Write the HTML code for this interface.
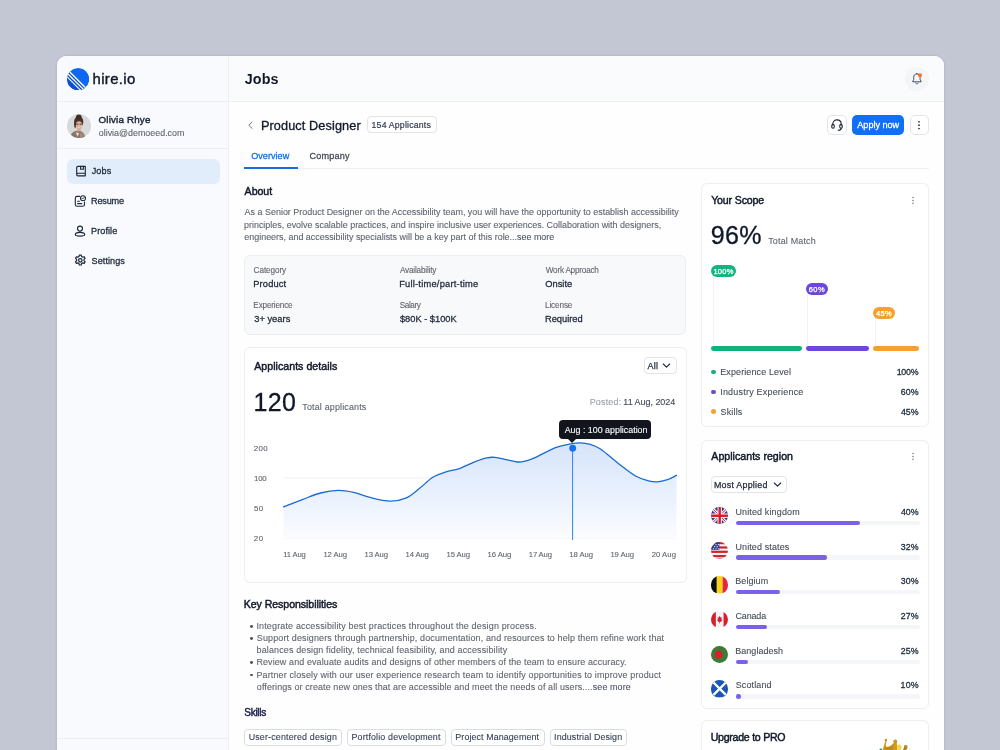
<!DOCTYPE html>
<html>
<head>
<meta charset="utf-8">
<style>
*{box-sizing:border-box;margin:0;padding:0}
html,body{width:1000px;height:750px;overflow:hidden}
body{background:#c3c6d3;font-family:"Liberation Sans",sans-serif;color:#101828;position:relative}
.a{position:absolute}
.t{position:absolute;white-space:pre;line-height:1}
#txt{position:absolute;left:0;top:0;width:1000px;height:750px;will-change:transform}
#card{position:absolute;left:57px;top:56px;width:887px;height:720px;background:#fefefe;border-radius:9.5px 9.5px 0 0;overflow:hidden;box-shadow:0 0 2px rgba(70,80,110,.25)}
#side{position:absolute;left:0;top:0;width:172px;height:720px;background:#f8fafd;border-right:1px solid #ebeef2}
#head{position:absolute;left:172px;top:0;width:715px;height:46px;background:#fafbfd;border-bottom:1px solid #ebeef2}
.hl{position:absolute;height:1px;background:#ebeef2}
.box{position:absolute;border:1px solid #eceef2;border-radius:6px;background:#fff}
.btn{position:absolute;border:1px solid #e1e4e9;border-radius:5px;background:#fff}
.chip{position:absolute;top:728.5px;height:17px;border:1px solid #d9dde3;border-radius:4px;background:#fff}
.tr{position:absolute;left:736px;width:183.5px;height:4.4px;border-radius:2.2px;background:#f4f6f9}
.fl{position:absolute;left:736px;height:4.4px;border-radius:2.2px;background:#7b61ea}
.flag{position:absolute;left:711px;width:17.4px;height:17.4px;border-radius:50%;overflow:hidden}
.flag svg{display:block;width:17.4px;height:17.4px}
.bd{position:absolute;height:11.8px;border-radius:6px}
</style>
</head>
<body>
<div id="card">
  <div id="side"></div>
  <div id="head"></div>
  <div class="hl" style="left:0;top:45px;width:172px"></div>
  <div class="hl" style="left:0;top:92px;width:172px"></div>
  <div class="hl" style="left:0;top:682px;width:172px"></div>
</div>

<!-- logo -->
<svg class="a" style="left:66.7px;top:67.8px" width="22.4" height="22.4" viewBox="0 0 22.4 22.4">
  <defs><clipPath id="lc"><circle cx="11.2" cy="11.2" r="11.1"/></clipPath></defs>
  <g clip-path="url(#lc)">
    <circle cx="11.2" cy="11.2" r="11.1" fill="#0f68f2"/>
    <path d="M-4 -3.4L24 24.6L-4 24.6Z" fill="#0a4fd8"/>
    <g stroke="#f8fafd">
      <line x1="-4" y1="-2.7" x2="24" y2="25.3" stroke-width="1.45"/>
      <line x1="-4" y1="1.0" x2="24" y2="29.0" stroke-width="1.3"/>
      <line x1="-4" y1="4.7" x2="24" y2="32.7" stroke-width="1.15"/>
    </g>
  </g>
</svg>

<!-- avatar -->
<div class="a" style="left:67px;top:113.6px;width:24px;height:24px;border-radius:50%;overflow:hidden">
  <svg width="24" height="24" viewBox="0 0 24 24" style="display:block">
    <rect width="24" height="24" fill="#d7d9db"/>
    <path d="M3 24C3.4 19.2 6.6 16.8 10.8 16.4C15 16.6 17.8 19 18 24Z" fill="#8b7567"/>
    <path d="M8.6 18.2L10.6 22.5L12.2 19.2Z" fill="#eadfd3"/>
    <path d="M13.5 18L16.4 20.5L15.6 24H12.8Z" fill="#a58d7d"/>
    <rect x="10" y="14" width="3.6" height="3.4" fill="#d6a78e"/>
    <ellipse cx="11.7" cy="7.8" rx="4.6" ry="5.6" fill="#49332a"/>
    <path d="M7.2 8C6.8 11 7.2 13.4 8.4 14.6L9.4 10Z" fill="#49332a"/>
    <ellipse cx="11.8" cy="2.9" rx="2.8" ry="2.5" fill="#3f2c25"/>
    <ellipse cx="12" cy="11.2" rx="3.1" ry="3.9" fill="#deb39c"/>
    <path d="M9.2 10.2H11.4M12.6 10.2H14.8" stroke="#3c2a26" stroke-width=".9"/>
    <path d="M10.8 13.2C11.5 13.8 12.6 13.8 13.3 13.2" stroke="#f3e6e0" stroke-width=".7" fill="none"/>
  </svg>
</div>

<!-- nav -->
<div class="a" style="left:67px;top:159px;width:153px;height:25px;border-radius:6px;background:#e2edfb"></div>
<svg class="a" style="left:74.7px;top:165.3px" width="12" height="12" viewBox="0 0 12 12" fill="none" stroke="#1d2939" stroke-width="1.15" stroke-linejoin="round" stroke-linecap="round">
  <path d="M1.7 9.4V2.6C1.7 1.8 2.3 1.3 3 1.3H10.3V8.2H3C2.3 8.2 1.7 8.7 1.7 9.5C1.7 10.2 2.3 10.8 3 10.8H10.3V8.2"/>
  <path d="M5.6 1.3V4.2H8.4V1.3"/>
</svg>
<svg class="a" style="left:74px;top:195px" width="12" height="12" viewBox="0 0 12 12" fill="none" stroke="#1d2939" stroke-width="1.1" stroke-linejoin="round" stroke-linecap="round">
  <path d="M5.6 1.4H3.1C2.1 1.4 1.3 2.2 1.3 3.2V9.4C1.3 10.4 2.1 11.2 3.1 11.2H8.7C9.7 11.2 10.5 10.4 10.5 9.4V7"/>
  <circle cx="9" cy="3.2" r="2.5"/>
  <path d="M8 3.3L8.7 4L10 2.5" stroke-width=".85"/>
  <path d="M3.6 6.3H5.4M3.6 8.6H7.8"/>
</svg>
<svg class="a" style="left:74.4px;top:225px" width="12" height="12" viewBox="0 0 12 12" fill="none" stroke="#1d2939" stroke-width="1.15" stroke-linejoin="round" stroke-linecap="round">
  <circle cx="6" cy="3.6" r="2.5"/>
  <path d="M6 7.4C3.3 7.4 1.3 8.4 1.3 9.6C1.3 10.6 2.8 11.1 6 11.1C9.2 11.1 10.7 10.6 10.7 9.6C10.7 8.4 8.7 7.4 6 7.4Z"/>
</svg>
<svg class="a" style="left:73.9px;top:254.2px" width="12.6" height="12.6" viewBox="0 0 24 24" fill="none" stroke="#1d2939" stroke-width="2.3" stroke-linejoin="round" stroke-linecap="round">
  <circle cx="12" cy="12" r="3.3"/>
  <path d="M10.2 2h3.6l.7 2.9 2 1.15 2.85-.85 1.8 3.1-2.15 2.05v2.3l2.15 2.05-1.8 3.1-2.85-.85-2 1.15-.7 2.9h-3.6l-.7-2.9-2-1.15-2.85.85-1.8-3.1 2.15-2.05v-2.3L2.85 8.3l1.8-3.1 2.85.85 2-1.15z"/>
</svg>

<!-- bell -->
<div class="a" style="left:904.5px;top:67.3px;width:24px;height:24px;border-radius:50%;background:#f3f5f8"></div>
<svg class="a" style="left:910px;top:72px" width="14" height="14" viewBox="0 0 14 14" fill="none" stroke="#475467" stroke-width="1" stroke-linejoin="round" stroke-linecap="round">
  <path d="M6.9 1.8C4.9 1.8 3.7 3.3 3.7 5.2V7.6L2.6 9.8H11.2L10.1 7.6V5.2C10.1 3.3 8.9 1.8 6.9 1.8Z"/>
  <path d="M5.7 10.9C6 11.6 6.4 11.9 6.9 11.9C7.4 11.9 7.8 11.6 8.1 10.9"/>
  <circle cx="10" cy="3.2" r="2" fill="#f97316" stroke="none"/>
</svg>

<!-- title row -->
<svg class="a" style="left:246px;top:120px" width="9" height="11" viewBox="0 0 9 11" fill="none" stroke="#667085" stroke-width="1" stroke-linecap="round" stroke-linejoin="round"><path d="M6 2.2L2.8 5.3L6 8.4"/></svg>
<div class="btn" style="left:367.3px;top:116.4px;width:69.4px;height:17px;border-radius:4px"></div>

<div class="btn" style="left:827.4px;top:115.4px;width:19.5px;height:19.5px"></div>
<svg class="a" style="left:830.2px;top:118.2px" width="14" height="14" viewBox="0 0 14 14" fill="none" stroke="#1d2939" stroke-width="1.1" stroke-linecap="round" stroke-linejoin="round">
  <path d="M2.8 7V6C2.8 3.6 4.6 1.9 7 1.9C9.4 1.9 11.2 3.6 11.2 6V7"/>
  <rect x="1.8" y="6.4" width="2.4" height="3.8" rx="1.1"/>
  <rect x="9.8" y="6.4" width="2.4" height="3.8" rx="1.1"/>
  <path d="M11.2 10.2C11.2 11.6 10 12.2 8.2 12.2"/>
</svg>
<div class="a" style="left:852.2px;top:115.4px;width:52px;height:19.5px;border-radius:5px;background:#0f6ff6"></div>
<div class="btn" style="left:909.5px;top:115.4px;width:19.3px;height:19.5px"></div>
<svg class="a" style="left:917.2px;top:120.2px" width="4" height="10" viewBox="0 0 4 10" fill="#1d2939"><circle cx="2" cy="1.8" r=".85"/><circle cx="2" cy="5.2" r=".85"/><circle cx="2" cy="8.5" r=".85"/></svg>

<!-- tabs -->
<div class="hl" style="left:244px;top:168px;width:685px"></div>
<div class="a" style="left:244px;top:166.7px;width:54px;height:2px;background:#1a6bde"></div>

<!-- info box -->
<div class="box" style="left:244.4px;top:255.2px;width:442px;height:79.4px;background:#f8f9fb"></div>

<!-- applicants details -->
<div class="box" style="left:244.4px;top:347.3px;width:442.2px;height:235.6px"></div>
<div class="btn" style="left:643.7px;top:357.2px;width:33px;height:17.2px;border-radius:4px"></div>
<svg class="a" style="left:662px;top:363px" width="9" height="6" viewBox="0 0 9 6" fill="none" stroke="#1d2939" stroke-width="1.1" stroke-linecap="round" stroke-linejoin="round"><path d="M1.3 1L4.5 4.2L7.7 1"/></svg>

<!-- chart -->
<svg class="a" style="left:244px;top:410px" width="443" height="140" viewBox="244 410 443 140">
  <defs>
    <linearGradient id="cg" gradientUnits="userSpaceOnUse" x1="0" y1="443" x2="0" y2="538">
      <stop offset="0" stop-color="#d6e4fa"/>
      <stop offset=".55" stop-color="#e9f1fd"/>
      <stop offset="1" stop-color="#fbfcff"/>
    </linearGradient>
  </defs>
  <line x1="284" y1="478" x2="600" y2="478" stroke="#f0f2f5" stroke-width="1"/>
  <line x1="284" y1="538" x2="676" y2="538" stroke="#f0f2f5" stroke-width="1"/>
  <path d="M283.5 506.8 C286.8 505.6 296.8 501.6 303.0 499.3 C309.2 497.0 314.7 494.5 320.6 493.0 C326.5 491.5 332.7 490.5 338.2 490.4 C343.7 490.3 348.5 491.3 353.6 492.4 C358.7 493.5 362.9 495.7 369.0 497.2 C375.1 498.7 383.7 501.1 389.9 501.2 C396.1 501.3 401.4 499.9 406.4 497.8 C411.3 495.7 415.2 491.7 419.6 488.3 C424.0 484.9 428.4 480.1 432.8 477.3 C437.2 474.6 441.6 473.2 446.0 471.8 C450.4 470.4 454.4 470.3 459.2 468.6 C464.0 466.9 470.0 463.6 474.6 461.8 C479.2 460.0 483.6 458.5 487.0 457.8 C490.4 457.1 491.8 457.1 495.0 457.4 C498.2 457.7 502.3 458.8 506.0 459.6 C509.7 460.4 513.9 461.8 517.4 462.0 C520.9 462.2 524.1 461.3 527.0 460.6 C529.9 459.9 530.4 459.8 535.0 457.7 C539.6 455.6 549.1 450.1 554.8 447.8 C560.5 445.6 564.8 445.0 569.0 444.2 C573.2 443.4 576.4 442.8 580.0 442.8 C583.6 442.8 587.1 443.4 590.5 444.4 C593.9 445.4 595.9 445.9 600.5 449.0 C605.1 452.1 612.2 458.7 618.0 463.2 C623.8 467.7 630.4 473.1 635.5 476.0 C640.6 478.9 644.9 479.8 648.5 480.8 C652.1 481.8 653.8 482.1 657.0 481.9 C660.2 481.7 664.2 480.8 667.5 479.7 C670.8 478.6 675.0 476.0 676.5 475.3 L676.5 538 L283.5 538 Z" fill="url(#cg)"/>
  <path d="M283.5 506.8 C286.8 505.6 296.8 501.6 303.0 499.3 C309.2 497.0 314.7 494.5 320.6 493.0 C326.5 491.5 332.7 490.5 338.2 490.4 C343.7 490.3 348.5 491.3 353.6 492.4 C358.7 493.5 362.9 495.7 369.0 497.2 C375.1 498.7 383.7 501.1 389.9 501.2 C396.1 501.3 401.4 499.9 406.4 497.8 C411.3 495.7 415.2 491.7 419.6 488.3 C424.0 484.9 428.4 480.1 432.8 477.3 C437.2 474.6 441.6 473.2 446.0 471.8 C450.4 470.4 454.4 470.3 459.2 468.6 C464.0 466.9 470.0 463.6 474.6 461.8 C479.2 460.0 483.6 458.5 487.0 457.8 C490.4 457.1 491.8 457.1 495.0 457.4 C498.2 457.7 502.3 458.8 506.0 459.6 C509.7 460.4 513.9 461.8 517.4 462.0 C520.9 462.2 524.1 461.3 527.0 460.6 C529.9 459.9 530.4 459.8 535.0 457.7 C539.6 455.6 549.1 450.1 554.8 447.8 C560.5 445.6 564.8 445.0 569.0 444.2 C573.2 443.4 576.4 442.8 580.0 442.8 C583.6 442.8 587.1 443.4 590.5 444.4 C593.9 445.4 595.9 445.9 600.5 449.0 C605.1 452.1 612.2 458.7 618.0 463.2 C623.8 467.7 630.4 473.1 635.5 476.0 C640.6 478.9 644.9 479.8 648.5 480.8 C652.1 481.8 653.8 482.1 657.0 481.9 C660.2 481.7 664.2 480.8 667.5 479.7 C670.8 478.6 675.0 476.0 676.5 475.3" fill="none" stroke="#1a6ad2" stroke-width="1.3" stroke-linecap="round"/>
  <line x1="572.6" y1="448" x2="572.6" y2="540" stroke="#2f86e6" stroke-width="1"/>
  <circle cx="572.7" cy="448.2" r="3.4" fill="#1570ef"/>
</svg>
<div class="a" style="left:558.8px;top:420.4px;width:92.4px;height:18.3px;border-radius:4px;background:#12151d"></div>
<div class="a" style="left:568.2px;top:438.5px;width:0;height:0;border-left:4.6px solid transparent;border-right:4.6px solid transparent;border-top:4.2px solid #12151d"></div>

<!-- bullets -->
<div class="a" style="left:250px;top:624.8px;width:2.8px;height:2.8px;border-radius:50%;background:#4a5160"></div>
<div class="a" style="left:250px;top:637.2px;width:2.8px;height:2.8px;border-radius:50%;background:#4a5160"></div>
<div class="a" style="left:250px;top:661.3px;width:2.8px;height:2.8px;border-radius:50%;background:#4a5160"></div>
<div class="a" style="left:250px;top:673.6px;width:2.8px;height:2.8px;border-radius:50%;background:#4a5160"></div>

<!-- chips -->
<div class="chip" style="left:244.4px;width:97.2px"></div>
<div class="chip" style="left:347.4px;width:98.4px"></div>
<div class="chip" style="left:451px;width:93.5px"></div>
<div class="chip" style="left:550px;width:76.6px"></div>

<!-- your scope -->
<div class="box" style="left:701.3px;top:183.4px;width:227.5px;height:244px"></div>
<svg class="a" style="left:910.8px;top:196px" width="4" height="9" viewBox="0 0 4 9" fill="#667085"><circle cx="2" cy="1.5" r=".75"/><circle cx="2" cy="4.4" r=".75"/><circle cx="2" cy="7.3" r=".75"/></svg>
<div class="a" style="left:713px;top:272px;width:1px;height:75px;background:#f0f2f5"></div>
<div class="a" style="left:807.2px;top:290px;width:1px;height:57px;background:#f0f2f5"></div>
<div class="a" style="left:874.5px;top:313px;width:1px;height:34px;background:#f0f2f5"></div>
<div class="bd" style="left:711px;top:265.3px;width:25.4px;background:#12b57f"></div>
<div class="bd" style="left:806px;top:283.4px;width:21.9px;background:#6c47d9"></div>
<div class="bd" style="left:872.8px;top:306.8px;width:22.1px;background:#f5a031"></div>
<div class="a" style="left:711px;top:346px;width:90.8px;height:4.7px;border-radius:2.4px;background:#12b07a"></div>
<div class="a" style="left:806px;top:346px;width:63px;height:4.7px;border-radius:2.4px;background:#6c47d9"></div>
<div class="a" style="left:873px;top:346px;width:46px;height:4.7px;border-radius:2.4px;background:#f5a031"></div>
<div class="a" style="left:711.1px;top:369.5px;width:4.6px;height:4.6px;border-radius:50%;background:#12b07a"></div>
<div class="a" style="left:711.1px;top:389.5px;width:4.6px;height:4.6px;border-radius:50%;background:#6c47d9"></div>
<div class="a" style="left:711.1px;top:409.4px;width:4.6px;height:4.6px;border-radius:50%;background:#f5a031"></div>

<!-- applicants region -->
<div class="box" style="left:701.3px;top:439.5px;width:227.5px;height:269px"></div>
<svg class="a" style="left:910.8px;top:452px" width="4" height="9" viewBox="0 0 4 9" fill="#667085"><circle cx="2" cy="1.5" r=".75"/><circle cx="2" cy="4.4" r=".75"/><circle cx="2" cy="7.3" r=".75"/></svg>
<div class="btn" style="left:711.3px;top:476.4px;width:75.3px;height:16.8px;border-radius:4px"></div>
<svg class="a" style="left:772.6px;top:482px" width="9" height="6" viewBox="0 0 9 6" fill="none" stroke="#1d2939" stroke-width="1.1" stroke-linecap="round" stroke-linejoin="round"><path d="M1.3 1L4.5 4.2L7.7 1"/></svg>

<div class="tr" style="top:520.8px"></div><div class="fl" style="top:520.8px;width:124px"></div>
<div class="tr" style="top:555.4px"></div><div class="fl" style="top:555.4px;width:90.5px"></div>
<div class="tr" style="top:590px"></div><div class="fl" style="top:590px;width:44.2px"></div>
<div class="tr" style="top:624.8px"></div><div class="fl" style="top:624.8px;width:31.2px"></div>
<div class="tr" style="top:659.5px"></div><div class="fl" style="top:659.5px;width:11.5px"></div>
<div class="tr" style="top:694.2px"></div><div class="fl" style="top:694.2px;width:5px"></div>

<!-- flags -->
<div class="flag" style="top:506.8px"><svg viewBox="0 0 18 18"><rect width="18" height="18" fill="#2a3a90"/><path d="M0 0L18 18M18 0L0 18" stroke="#f4f4f6" stroke-width="3"/><path d="M0 0L18 18M18 0L0 18" stroke="#d6202d" stroke-width="1"/><path d="M9 0V18M0 9H18" stroke="#f4f4f6" stroke-width="4.6"/><path d="M9 0V18M0 9H18" stroke="#d6202d" stroke-width="2.5"/></svg></div>
<div class="flag" style="top:541.6px"><svg viewBox="0 0 18 18"><rect width="18" height="18" fill="#f4f4f6"/><g fill="#d6202d"><rect y="0" width="18" height="2.3"/><rect y="4.5" width="18" height="2.3"/><rect y="9" width="18" height="2.3"/><rect y="13.5" width="18" height="2.3"/></g><rect y="17" width="18" height="1" fill="#d6202d"/><rect width="8.6" height="8.2" fill="#2b3c8f"/><g fill="#fff"><circle cx="2.6" cy="2.6" r=".65"/><circle cx="5.2" cy="2.6" r=".65"/><circle cx="7.6" cy="2.6" r=".65"/><circle cx="3.8" cy="4.8" r=".65"/><circle cx="6.4" cy="4.8" r=".65"/><circle cx="2.6" cy="7" r=".65"/><circle cx="5.2" cy="7" r=".65"/><circle cx="7.6" cy="7" r=".65"/></g></svg></div>
<div class="flag" style="top:576.2px"><svg viewBox="0 0 18 18"><rect width="6" height="18" fill="#0d0d0d"/><rect x="6" width="6" height="18" fill="#fad31b"/><rect x="12" width="6" height="18" fill="#e5283a"/></svg></div>
<div class="flag" style="top:610.8px"><svg viewBox="0 0 18 18"><rect width="18" height="18" fill="#f4f4f6"/><rect width="5" height="18" fill="#d6202d"/><rect x="13" width="5" height="18" fill="#d6202d"/><path d="M9 5L9.9 6.8L11.2 6.4L10.7 8.5L12.2 9.2L10.5 10.4L10.7 11.5L9.3 11.2V13H8.7V11.2L7.3 11.5L7.5 10.4L5.8 9.2L7.3 8.5L6.8 6.4L8.1 6.8Z" fill="#d6202d"/></svg></div>
<div class="flag" style="top:645.6px"><svg viewBox="0 0 18 18"><rect width="18" height="18" fill="#3f7a36"/><circle cx="7.8" cy="9" r="4" fill="#d6202d"/></svg></div>
<div class="flag" style="top:680.3px"><svg viewBox="0 0 18 18"><rect width="18" height="18" fill="#1b55b5"/><path d="M2.6 2.6L15.4 15.4M15.4 2.6L2.6 15.4" stroke="#fff" stroke-width="2.5"/></svg></div>

<!-- upgrade -->
<div class="box" style="left:701.3px;top:719.5px;width:227.5px;height:60px"></div>
<svg class="a" style="left:872px;top:732px" width="44" height="18" viewBox="872 732 44 18">
  <path d="M882.6 750L885.4 740.4L886.5 740.6L885.8 746.2C888 747.6 891.2 746.4 894 742.2L896.8 741.8L897.2 750Z" fill="#d09a1e"/>
  <path d="M884.6 750L885.6 746.4C888 747.8 891 747 893.4 744L893 750Z" fill="#c08a18"/>
  <ellipse cx="899.2" cy="747.3" rx="2.3" ry="2.9" fill="#f5d640"/>
  <circle cx="895.3" cy="741.3" r="1.8" fill="#bf8a1a"/>
  <circle cx="895.7" cy="741.3" r=".7" fill="#e0b230"/>
  <circle cx="885.9" cy="739.9" r="1.25" fill="#c8921c"/>
  <path d="M902.6 750L904.6 747.5L906.8 748L906.4 750Z" fill="#b07a1a"/>
  <circle cx="905.7" cy="746.9" r="1.9" fill="#b37e1c"/>
  <circle cx="906" cy="746.7" r=".7" fill="#d5a52a"/>
  <circle cx="880.8" cy="749.7" r="1.3" fill="#1e9a6b"/>
</svg>
<div id="txt">
<div class="t" style="left:92.57px;top:72.00px;font-size:14.90px;letter-spacing:0.359px;color:#101828;-webkit-text-stroke:0.40px #101828;">hire.io</div>
<div class="t" style="left:98.54px;top:115.00px;font-size:9.80px;letter-spacing:0.175px;color:#1d2939;-webkit-text-stroke:0.45px #1d2939;">Olivia Rhye</div>
<div class="t" style="left:98.72px;top:129.00px;font-size:8.90px;letter-spacing:0.013px;color:#5f646e;-webkit-text-stroke:0.10px #5f646e;">olivia@demoeed.com</div>
<div class="t" style="left:91.66px;top:167.00px;font-size:9.10px;letter-spacing:0.168px;color:#1d2939;-webkit-text-stroke:0.28px #1d2939;">Jobs</div>
<div class="t" style="left:91.09px;top:197.00px;font-size:9.10px;letter-spacing:-0.181px;color:#1d2939;-webkit-text-stroke:0.28px #1d2939;">Resume</div>
<div class="t" style="left:91.09px;top:227.00px;font-size:9.10px;letter-spacing:0.064px;color:#1d2939;-webkit-text-stroke:0.28px #1d2939;">Profile</div>
<div class="t" style="left:91.52px;top:257.00px;font-size:9.10px;letter-spacing:0.070px;color:#1d2939;-webkit-text-stroke:0.28px #1d2939;">Settings</div>
<div class="t" style="left:244.70px;top:72.00px;font-size:14.30px;letter-spacing:0.168px;color:#101828;font-weight:700;">Jobs</div>
<div class="t" style="left:260.91px;top:120.00px;font-size:12.70px;letter-spacing:0.116px;color:#101828;-webkit-text-stroke:0.30px #101828;">Product Designer</div>
<div class="t" style="left:371.56px;top:121.00px;font-size:8.70px;letter-spacing:0.211px;color:#344054;-webkit-text-stroke:0.22px #344054;">154 Applicants</div>
<div class="t" style="left:857.30px;top:121.00px;font-size:9.10px;letter-spacing:-0.012px;color:#ffffff;-webkit-text-stroke:0.28px #ffffff;">Apply now</div>
<div class="t" style="left:251.17px;top:152.00px;font-size:9.10px;letter-spacing:0.027px;color:#1a6bde;-webkit-text-stroke:0.28px #1a6bde;">Overview</div>
<div class="t" style="left:309.57px;top:152.00px;font-size:9.10px;letter-spacing:0.197px;color:#454b58;-webkit-text-stroke:0.28px #454b58;">Company</div>
<div class="t" style="left:244.60px;top:186.00px;font-size:10.60px;letter-spacing:-0.034px;color:#101828;-webkit-text-stroke:0.45px #101828;">About</div>
<div class="t" style="left:244.60px;top:208.00px;font-size:8.95px;letter-spacing:0.004px;color:#5f646e;-webkit-text-stroke:0.10px #5f646e;">As a Senior Product Designer on the Accessibility team, you will have the opportunity to establish accessibility</div>
<div class="t" style="left:244.04px;top:221.00px;font-size:8.95px;letter-spacing:-0.006px;color:#5f646e;-webkit-text-stroke:0.10px #5f646e;">principles, evolve scalable practices, and inspire inclusive user experiences. Collaboration with designers,</div>
<div class="t" style="left:244.32px;top:233.00px;font-size:8.95px;letter-spacing:-0.007px;color:#5f646e;-webkit-text-stroke:0.10px #5f646e;">engineers, and accessibility specialists will be a key part of this role...<span style="color:#475467">see more</span></div>
<div class="t" style="left:253.62px;top:267.00px;font-size:8.20px;letter-spacing:-0.098px;color:#5f646e;-webkit-text-stroke:0.10px #5f646e;">Category</div>
<div class="t" style="left:253.27px;top:280.00px;font-size:9.30px;letter-spacing:0.141px;color:#1d2939;-webkit-text-stroke:0.28px #1d2939;">Product</div>
<div class="t" style="left:253.36px;top:302.00px;font-size:8.20px;letter-spacing:-0.183px;color:#5f646e;-webkit-text-stroke:0.10px #5f646e;">Experience</div>
<div class="t" style="left:254.21px;top:315.00px;font-size:9.30px;letter-spacing:0.022px;color:#1d2939;-webkit-text-stroke:0.28px #1d2939;">3+ years</div>
<div class="t" style="left:399.90px;top:267.00px;font-size:8.20px;letter-spacing:-0.190px;color:#5f646e;-webkit-text-stroke:0.10px #5f646e;">Availability</div>
<div class="t" style="left:399.17px;top:280.00px;font-size:9.30px;letter-spacing:0.226px;color:#1d2939;-webkit-text-stroke:0.28px #1d2939;">Full-time/part-time</div>
<div class="t" style="left:399.64px;top:302.00px;font-size:8.20px;letter-spacing:-0.377px;color:#5f646e;-webkit-text-stroke:0.10px #5f646e;">Salary</div>
<div class="t" style="left:399.90px;top:315.00px;font-size:9.30px;letter-spacing:-0.007px;color:#1d2939;-webkit-text-stroke:0.28px #1d2939;">$80K - $100K</div>
<div class="t" style="left:545.70px;top:267.00px;font-size:8.20px;letter-spacing:-0.217px;color:#5f646e;-webkit-text-stroke:0.10px #5f646e;">Work Approach</div>
<div class="t" style="left:545.26px;top:280.00px;font-size:9.30px;letter-spacing:0.007px;color:#1d2939;-webkit-text-stroke:0.28px #1d2939;">Onsite</div>
<div class="t" style="left:545.06px;top:302.00px;font-size:8.20px;letter-spacing:-0.148px;color:#5f646e;-webkit-text-stroke:0.10px #5f646e;">License</div>
<div class="t" style="left:544.97px;top:315.00px;font-size:9.30px;letter-spacing:0.001px;color:#1d2939;-webkit-text-stroke:0.28px #1d2939;">Required</div>
<div class="t" style="left:254.20px;top:361.00px;font-size:10.60px;letter-spacing:0.038px;color:#101828;-webkit-text-stroke:0.45px #101828;">Applicants details</div>
<div class="t" style="left:647.60px;top:362.00px;font-size:9.00px;letter-spacing:0.146px;color:#1d2939;-webkit-text-stroke:0.25px #1d2939;">All</div>
<div class="t" style="left:253.44px;top:390.00px;font-size:25.00px;letter-spacing:0.387px;color:#101828;-webkit-text-stroke:0.30px #101828;">120</div>
<div class="t" style="left:302.36px;top:403.00px;font-size:8.95px;letter-spacing:0.155px;color:#5f646e;-webkit-text-stroke:0.10px #5f646e;">Total applicants</div>
<div class="t" style="left:589.70px;top:398.00px;font-size:8.95px;letter-spacing:0.193px;color:#9a9fa9;-webkit-text-stroke:0.10px #9a9fa9;">Posted:</div>
<div class="t" style="left:623.34px;top:398.00px;font-size:8.95px;letter-spacing:-0.009px;color:#454b58;-webkit-text-stroke:0.14px #454b58;">11 Aug, 2024</div>
<div class="t" style="left:564.70px;top:426.00px;font-size:8.90px;letter-spacing:-0.006px;color:#ffffff;-webkit-text-stroke:0.10px #ffffff;">Aug : 100 application</div>
<div class="t" style="left:253.83px;top:445.00px;font-size:7.90px;letter-spacing:0.293px;color:#5f646e;-webkit-text-stroke:0.10px #5f646e;">200</div>
<div class="t" style="left:254.11px;top:475.00px;font-size:7.90px;letter-spacing:-0.295px;color:#5f646e;-webkit-text-stroke:0.10px #5f646e;">100</div>
<div class="t" style="left:253.95px;top:505.00px;font-size:7.90px;letter-spacing:0.356px;color:#5f646e;-webkit-text-stroke:0.10px #5f646e;">50</div>
<div class="t" style="left:253.83px;top:535.00px;font-size:7.90px;letter-spacing:0.580px;color:#5f646e;-webkit-text-stroke:0.10px #5f646e;">20</div>
<div class="t" style="left:283.32px;top:551.00px;font-size:7.70px;letter-spacing:-0.164px;color:#5f646e;-webkit-text-stroke:0.10px #5f646e;">11 Aug</div>
<div class="t" style="left:323.42px;top:551.00px;font-size:7.70px;letter-spacing:-0.078px;color:#5f646e;-webkit-text-stroke:0.10px #5f646e;">12 Aug</div>
<div class="t" style="left:364.52px;top:551.00px;font-size:7.70px;letter-spacing:-0.078px;color:#5f646e;-webkit-text-stroke:0.10px #5f646e;">13 Aug</div>
<div class="t" style="left:405.52px;top:551.00px;font-size:7.70px;letter-spacing:-0.118px;color:#5f646e;-webkit-text-stroke:0.10px #5f646e;">14 Aug</div>
<div class="t" style="left:446.62px;top:551.00px;font-size:7.70px;letter-spacing:-0.118px;color:#5f646e;-webkit-text-stroke:0.10px #5f646e;">15 Aug</div>
<div class="t" style="left:487.62px;top:551.00px;font-size:7.70px;letter-spacing:-0.078px;color:#5f646e;-webkit-text-stroke:0.10px #5f646e;">16 Aug</div>
<div class="t" style="left:528.82px;top:551.00px;font-size:7.70px;letter-spacing:-0.158px;color:#5f646e;-webkit-text-stroke:0.10px #5f646e;">17 Aug</div>
<div class="t" style="left:569.32px;top:551.00px;font-size:7.70px;letter-spacing:-0.038px;color:#5f646e;-webkit-text-stroke:0.10px #5f646e;">18 Aug</div>
<div class="t" style="left:610.42px;top:551.00px;font-size:7.70px;letter-spacing:-0.078px;color:#5f646e;-webkit-text-stroke:0.10px #5f646e;">19 Aug</div>
<div class="t" style="left:651.64px;top:551.00px;font-size:7.70px;letter-spacing:0.078px;color:#5f646e;-webkit-text-stroke:0.10px #5f646e;">20 Aug</div>
<div class="t" style="left:243.77px;top:599.00px;font-size:10.60px;letter-spacing:-0.068px;color:#101828;-webkit-text-stroke:0.45px #101828;">Key Responsibilities</div>
<div class="t" style="left:256.40px;top:622.00px;font-size:8.95px;letter-spacing:0.177px;color:#5f646e;-webkit-text-stroke:0.10px #5f646e;">Integrate accessibility best practices throughout the design process.</div>
<div class="t" style="left:256.82px;top:634.00px;font-size:8.95px;letter-spacing:0.149px;color:#5f646e;-webkit-text-stroke:0.10px #5f646e;">Support designers through partnership, documentation, and resources to help them refine work that</div>
<div class="t" style="left:256.54px;top:646.00px;font-size:8.95px;letter-spacing:0.154px;color:#5f646e;-webkit-text-stroke:0.10px #5f646e;">balances design fidelity, technical feasibility, and accessibility</div>
<div class="t" style="left:256.40px;top:658.00px;font-size:8.95px;letter-spacing:0.124px;color:#5f646e;-webkit-text-stroke:0.10px #5f646e;">Review and evaluate audits and designs of other members of the team to ensure accuracy.</div>
<div class="t" style="left:256.40px;top:671.00px;font-size:8.95px;letter-spacing:0.155px;color:#5f646e;-webkit-text-stroke:0.10px #5f646e;">Partner closely with our user experience research team to identify opportunities to improve product</div>
<div class="t" style="left:256.82px;top:683.00px;font-size:8.95px;letter-spacing:0.109px;color:#5f646e;-webkit-text-stroke:0.10px #5f646e;">offerings or create new ones that are accessible and meet the needs of all users....<span style="color:#475467">see more</span></div>
<div class="t" style="left:244.28px;top:708.00px;font-size:10.10px;letter-spacing:-0.307px;color:#1b1f4b;-webkit-text-stroke:0.45px #1b1f4b;">Skills</div>
<div class="t" style="left:248.64px;top:733.00px;font-size:8.90px;letter-spacing:0.177px;color:#344054;-webkit-text-stroke:0.10px #344054;">User-centered design</div>
<div class="t" style="left:351.50px;top:733.00px;font-size:8.90px;letter-spacing:0.154px;color:#344054;-webkit-text-stroke:0.10px #344054;">Portfolio development</div>
<div class="t" style="left:455.30px;top:733.00px;font-size:8.90px;letter-spacing:0.103px;color:#344054;-webkit-text-stroke:0.10px #344054;">Project Management</div>
<div class="t" style="left:554.10px;top:733.00px;font-size:8.90px;letter-spacing:0.119px;color:#344054;-webkit-text-stroke:0.10px #344054;">Industrial Design</div>
<div class="t" style="left:711.13px;top:195.00px;font-size:10.60px;letter-spacing:-0.147px;color:#101828;-webkit-text-stroke:0.45px #101828;">Your Scope</div>
<div class="t" style="left:710.63px;top:223.00px;font-size:25.00px;letter-spacing:0.390px;color:#101828;-webkit-text-stroke:0.30px #101828;">96%</div>
<div class="t" style="left:768.16px;top:237.00px;font-size:8.95px;letter-spacing:0.188px;color:#5f646e;-webkit-text-stroke:0.10px #5f646e;">Total Match</div>
<div class="t" style="left:713.43px;top:268.00px;font-size:7.50px;letter-spacing:0.270px;color:#ffffff;-webkit-text-stroke:0.25px #ffffff;">100%</div>
<div class="t" style="left:808.75px;top:286.00px;font-size:7.50px;letter-spacing:0.432px;color:#ffffff;-webkit-text-stroke:0.25px #ffffff;">60%</div>
<div class="t" style="left:876.08px;top:310.00px;font-size:7.50px;letter-spacing:0.315px;color:#ffffff;-webkit-text-stroke:0.25px #ffffff;">45%</div>
<div class="t" style="left:720.20px;top:368.00px;font-size:8.95px;letter-spacing:0.142px;color:#454b58;-webkit-text-stroke:0.10px #454b58;">Experience Level</div>
<div class="t" style="left:720.20px;top:388.00px;font-size:8.95px;letter-spacing:0.231px;color:#454b58;-webkit-text-stroke:0.10px #454b58;">Industry Experience</div>
<div class="t" style="left:720.62px;top:408.00px;font-size:8.95px;letter-spacing:0.155px;color:#454b58;-webkit-text-stroke:0.10px #454b58;">Skills</div>
<div class="t" style="left:896.65px;top:368.00px;font-size:8.80px;letter-spacing:-0.198px;color:#1d2939;-webkit-text-stroke:0.28px #1d2939;">100%</div>
<div class="t" style="left:900.69px;top:388.00px;font-size:8.80px;letter-spacing:0.131px;color:#1d2939;-webkit-text-stroke:0.28px #1d2939;">60%</div>
<div class="t" style="left:900.96px;top:408.00px;font-size:8.80px;letter-spacing:-0.007px;color:#1d2939;-webkit-text-stroke:0.28px #1d2939;">45%</div>
<div class="t" style="left:711.30px;top:451.00px;font-size:10.60px;letter-spacing:0.024px;color:#101828;-webkit-text-stroke:0.45px #101828;">Applicants region</div>
<div class="t" style="left:714.00px;top:481.00px;font-size:8.90px;letter-spacing:0.231px;color:#1d2939;-webkit-text-stroke:0.25px #1d2939;">Most Applied</div>
<div class="t" style="left:735.44px;top:508.00px;font-size:8.95px;letter-spacing:0.157px;color:#454b58;-webkit-text-stroke:0.10px #454b58;">United kingdom</div>
<div class="t" style="left:900.96px;top:508.00px;font-size:8.80px;letter-spacing:-0.007px;color:#1d2939;-webkit-text-stroke:0.28px #1d2939;">40%</div>
<div class="t" style="left:735.44px;top:543.00px;font-size:8.95px;letter-spacing:0.134px;color:#454b58;-webkit-text-stroke:0.10px #454b58;">United states</div>
<div class="t" style="left:900.83px;top:543.00px;font-size:8.80px;letter-spacing:0.062px;color:#1d2939;-webkit-text-stroke:0.28px #1d2939;">32%</div>
<div class="t" style="left:735.30px;top:577.00px;font-size:8.95px;letter-spacing:0.088px;color:#454b58;-webkit-text-stroke:0.10px #454b58;">Belgium</div>
<div class="t" style="left:900.83px;top:577.00px;font-size:8.80px;letter-spacing:0.062px;color:#1d2939;-webkit-text-stroke:0.28px #1d2939;">30%</div>
<div class="t" style="left:735.58px;top:612.00px;font-size:8.95px;letter-spacing:-0.158px;color:#454b58;-webkit-text-stroke:0.10px #454b58;">Canada</div>
<div class="t" style="left:900.69px;top:612.00px;font-size:8.80px;letter-spacing:0.131px;color:#1d2939;-webkit-text-stroke:0.28px #1d2939;">27%</div>
<div class="t" style="left:735.30px;top:647.00px;font-size:8.95px;letter-spacing:0.058px;color:#454b58;-webkit-text-stroke:0.10px #454b58;">Bangladesh</div>
<div class="t" style="left:900.69px;top:647.00px;font-size:8.80px;letter-spacing:0.131px;color:#1d2939;-webkit-text-stroke:0.28px #1d2939;">25%</div>
<div class="t" style="left:735.72px;top:681.00px;font-size:8.95px;letter-spacing:0.150px;color:#454b58;-webkit-text-stroke:0.10px #454b58;">Scotland</div>
<div class="t" style="left:900.55px;top:681.00px;font-size:8.80px;letter-spacing:0.200px;color:#1d2939;-webkit-text-stroke:0.28px #1d2939;">10%</div>
<div class="t" style="left:710.64px;top:732.00px;font-size:10.60px;letter-spacing:-0.257px;color:#101828;-webkit-text-stroke:0.45px #101828;">Upgrade to PRO</div>
</div>
</body>
</html>
